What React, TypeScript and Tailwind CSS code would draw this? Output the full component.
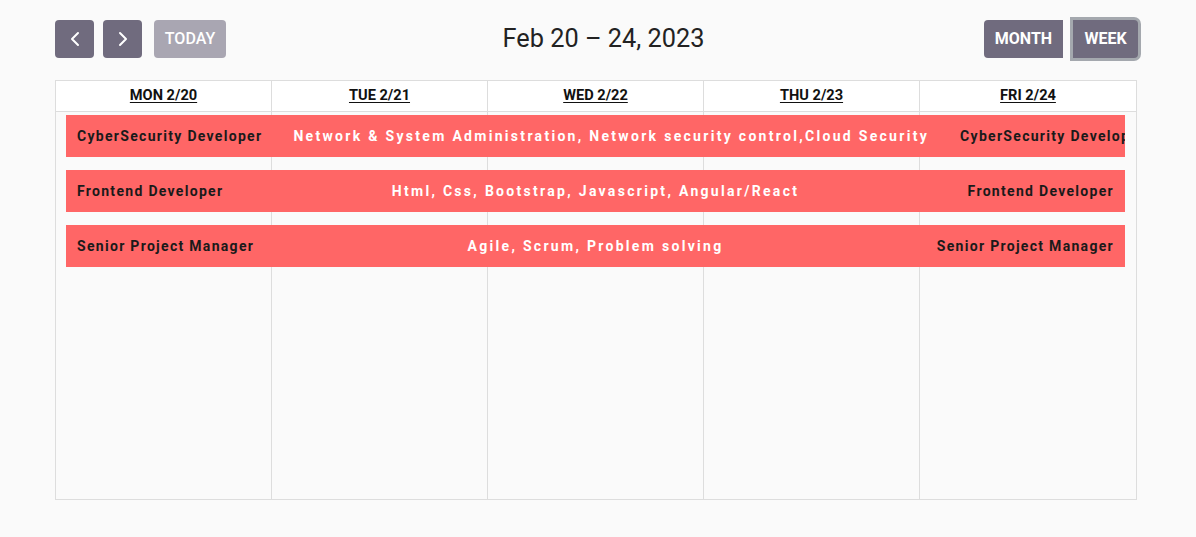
import React from "react";

const days = ["MON 2/20", "TUE 2/21", "WED 2/22", "THU 2/23", "FRI 2/24"];

const events = [
  {
    title: "CyberSecurity Developer",
    skills: "Network & System Administration, Network security control,Cloud Security",
  },
  { title: "Frontend Developer", skills: "Html, Css, Bootstrap, Javascript, Angular/React" },
  { title: "Senior Project Manager", skills: "Agile, Scrum, Problem solving" },
];

function Chevron({ dir }: { dir: "left" | "right" }) {
  return (
    <svg width="10" height="16" viewBox="0 0 10 16" fill="none">
      {dir === "left" ? (
        <polyline points="8,2 2,8 8,14" stroke="white" strokeWidth="2" strokeLinecap="round" strokeLinejoin="round" />
      ) : (
        <polyline points="2,2 8,8 2,14" stroke="white" strokeWidth="2" strokeLinecap="round" strokeLinejoin="round" />
      )}
    </svg>
  );
}

export default function App() {
  return (
    <div
      className="w-[1196px] h-[537px] bg-[#fafafa] overflow-hidden"
      style={{ fontFamily: "Roboto, 'Liberation Sans', sans-serif" }}
    >
      <div className="pl-[55px] pr-[57px] pt-[20px]">
        {/* toolbar */}
        <div className="flex items-center justify-between h-[38px]">
          <div className="flex items-center w-[300px]">
            <button className="w-[39px] h-[38px] rounded-[4px] bg-[#706b7e] flex items-center justify-center">
              <Chevron dir="left" />
            </button>
            <button className="ml-[9px] w-[39px] h-[38px] rounded-[4px] bg-[#706b7e] flex items-center justify-center">
              <Chevron dir="right" />
            </button>
            <button className="ml-[12px] w-[72px] h-[38px] rounded-[4px] bg-[#a9a6b2] text-white text-[16px] font-medium">
              TODAY
            </button>
          </div>
          <div className="text-[25.3px] text-[#222222] leading-none pl-[13px]">Feb 20 – 24, 2023</div>
          <div className="flex items-center justify-end w-[300px]">
            <button className="w-[79px] h-[38px] rounded-l-[4px] bg-[#706b7e] text-white text-[16px] font-bold">
              MONTH
            </button>
            <button className="ml-[10px] w-[65px] h-[38px] rounded-r-[4px] bg-[#706b7e] text-white text-[16px] font-bold ring-[3px] ring-[#a4a8ae] mr-[1px]">
              WEEK
            </button>
          </div>
        </div>

        {/* calendar */}
        <div className="mt-[22px] w-[1082px] border border-[#dddddd]">
          <div className="grid grid-cols-5 bg-white h-[31px] border-b border-[#dddddd]">
            {days.map((d, i) => (
              <div
                key={d}
                className={`flex items-center justify-center text-[14.6px] font-bold text-[#111] underline underline-offset-2 ${
                  i < 4 ? "border-r border-[#dddddd]" : ""
                }`}
              >
                {d}
              </div>
            ))}
          </div>
          <div className="relative h-[387px]">
            <div className="grid grid-cols-5 h-full">
              {days.map((d, i) => (
                <div key={d} className={i < 4 ? "border-r border-[#dddddd]" : ""} />
              ))}
            </div>
            <div className="absolute left-[10px] right-[11px] top-[3px] flex flex-col gap-[13px]">
              {events.map((e) => (
                <div
                  key={e.title}
                  className="h-[42px] bg-[#ff6666] flex items-center justify-between gap-[31px] px-[11px] overflow-hidden whitespace-nowrap text-[14px] font-bold"
                >
                  <span className="shrink-0 text-[#1a1a1a] tracking-[1.3px]">{e.title}</span>
                  <span className="shrink-0 text-white tracking-[2.3px]">{e.skills}</span>
                  <span className="shrink-0 text-[#1a1a1a] tracking-[1.3px]">{e.title}</span>
                </div>
              ))}
            </div>
          </div>
        </div>
      </div>
    </div>
  );
}
